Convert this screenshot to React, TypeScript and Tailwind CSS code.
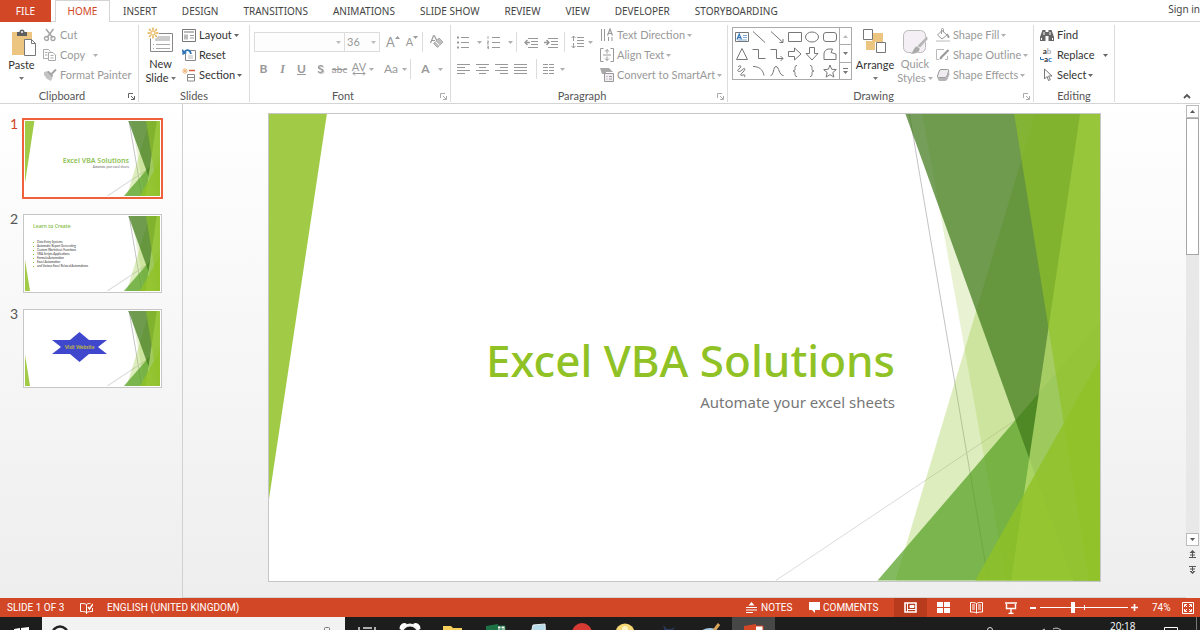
import React from "react";
import type { ReactNode } from "react";

const TABS = [
  "INSERT",
  "DESIGN",
  "TRANSITIONS",
  "ANIMATIONS",
  "SLIDE SHOW",
  "REVIEW",
  "VIEW",
  "DEVELOPER",
  "STORYBOARDING",
];

function Caret({ className = "text-[#777]" }: { className?: string }) {
  return (
    <svg width="5" height="3" viewBox="0 0 5 3" className={`shrink-0 ${className}`} aria-hidden="true">
      <path d="M0 0h5L2.5 3z" fill="currentColor" />
    </svg>
  );
}

function Icon({ w = 16, h = 16, children, className = "" }: { w?: number; h?: number; children: ReactNode; className?: string }) {
  return (
    <svg
      width={w}
      height={h}
      viewBox={`0 0 ${w} ${h}`}
      fill="none"
      stroke="currentColor"
      className={`shrink-0 ${className}`}
      aria-hidden="true"
    >
      {children}
    </svg>
  );
}

function Group({
  label,
  className,
  launcher,
  children,
}: {
  label: string;
  className: string;
  launcher?: "on" | "off";
  children: ReactNode;
}) {
  return (
    <section aria-label={label} className={`mb-px mt-[3px] flex shrink-0 flex-col border-r border-[#dcdcdc] ${className}`}>
      <div className="flex h-[60px]">{children}</div>
      <div className="flex flex-1 items-end">
        <span className="flex-1 text-center text-[11px] leading-[13px] text-[#555]">{label}</span>
        {launcher && (
          <button type="button" aria-label={`${label} options`} className="flex h-[11px] w-[14px] items-center pl-1">
            <Icon w={7} h={7} className={launcher === "on" ? "text-[#666]" : "text-[#aaa]"}>
              <path d="M.5 5V.5H5M3 3l3 3M6.5 3v3.500H3" />
            </Icon>
          </button>
        )}
      </div>
    </section>
  );
}

function RowButton({
  icon,
  label,
  caret,
  enabled,
  wide,
}: {
  icon: ReactNode;
  label: string;
  caret?: boolean;
  enabled?: boolean;
  wide?: boolean;
}) {
  return (
    <button
      type="button"
      className={`flex h-5 items-center whitespace-nowrap text-[11px] ${enabled ? "text-[#333]" : "text-[#999]"}`}
    >
      <span className="flex w-[17px] items-center">{icon}</span>
      <span>{label}</span>
      {caret && (
        <span className={wide ? "ml-2" : "ml-[2px]"}>
          <Caret className={enabled ? "text-[#666]" : "text-[#b0b0b0]"} />
        </span>
      )}
    </button>
  );
}

function Tool({ label, className = "w-[19px]", children }: { label: string; className?: string; children: ReactNode }) {
  return (
    <button type="button" aria-label={label} className={`flex h-5 shrink-0 items-center justify-center text-[#999] ${className}`}>
      {children}
    </button>
  );
}

function Divider() {
  return <span className="h-5 w-px shrink-0 bg-[#dcdcdc]" />;
}

function Lines({ rows, w = 13 }: { rows: [number, number][]; w?: number }) {
  return (
    <Icon w={w} h={11}>
      <path d={rows.map(([a, b], i) => `M${a} ${i * 3 + 0.5}H${b}`).join("")} />
    </Icon>
  );
}

function ClipboardGroup() {
  return (
    <Group label="Clipboard" className="w-[139px]" launcher="on">
      <button type="button" className="flex w-[43px] flex-col items-center pt-1 text-[11px] text-[#333]">
        <Icon w={26} h={28} className="ml-1">
          <path d="M1 3h20v23H1z" fill="#ecc681" stroke="none" />
          <path d="M6 3h2.500a2.500 2.500 0 0 1 5 0H16v4H6z" fill="#5f5f5f" stroke="none" />
          <circle cx="11" cy="3" r="1" fill="#fff" stroke="none" />
          <path d="M13.500 10.500h7l4 4v12h-11z" fill="#fff" stroke="#777" />
          <path d="M20.500 10.500v4h4" stroke="#777" />
        </Icon>
        <span className="leading-4">Paste</span>
        <span className="pt-1">
          <Caret />
        </span>
      </button>
      <div className="flex flex-col">
        <RowButton
          label="Cut"
          icon={
            <Icon w={14} h={14} className="text-[#a5a5a5]">
              <path d="M3 1l6.500 8.500M10.500 1L4 9.500" strokeWidth="1.500" />
              <circle cx="3.500" cy="10.500" r="2" strokeWidth="1.300" />
              <circle cx="10" cy="10.500" r="2" strokeWidth="1.300" />
            </Icon>
          }
        />
        <RowButton
          label="Copy"
          caret
          wide
          icon={
            <Icon w={14} h={14} className="text-[#aaa]">
              <path d="M5 10.500H.5v-9h5l2 2M2 4.500h2.500M2 7h2.500" />
              <path d="M5.500 4.500h4.500l2.500 2.500v5.500h-7zM7.500 7.500h3M7.500 10h3" fill="#fff" />
            </Icon>
          }
        />
        <RowButton
          label="Format Painter"
          icon={
            <Icon w={14} h={14} className="text-[#a5a5a5]">
              <path d="M1 4l4-1 5 5-2 5-4-2-3-4z" fill="#c4c4c4" stroke="none" />
              <path d="M5 3.500l4.500 4.500M8 6.500L13 1.500" strokeWidth="2" />
            </Icon>
          }
        />
      </div>
    </Group>
  );
}

function SlidesGroup() {
  return (
    <Group label="Slides" className="w-[111px]">
      <button type="button" className="flex w-[43px] flex-col items-center pt-[2px] text-[11px] text-[#333]">
        <Icon w={27} h={30}>
          <path d="M3.500 6.500h22v18h-22z" fill="#fff" stroke="#888" />
          <path d="M8 9h15v5H8z" fill="#ccc" stroke="none" />
          <path d="M6 17.500h1M9 17.500h14M6 21.500h1M9 21.500h14" stroke="#aaa" />
          <circle cx="6" cy="6" r="6" fill="#fff" stroke="none" />
          <path d="M6 .5v3M6 8.500v3M.5 6h3M8.500 6h3M2 2l2 2M8 8l2 2M10 2L8 4M4 8l-2 2" stroke="#e6b04e" strokeWidth="1.400" />
          <circle cx="6" cy="6" r="2" stroke="#e6b04e" />
        </Icon>
        <span className="leading-[14px]">New</span>
        <span className="flex items-center gap-[2px] leading-[14px]">
          Slide <Caret />
        </span>
      </button>
      <div className="flex flex-col">
        <RowButton
          enabled
          caret
          label="Layout"
          icon={
            <Icon w={14} h={13}>
              <path d="M.5.5h13v12H.5z" fill="#fff" stroke="#777" />
              <path d="M2 2h10v2H2zM2 5.500h4v5H2z" fill="#bbb" stroke="none" />
              <path d="M8 6.500h4M8 9h4" stroke="#999" />
            </Icon>
          }
        />
        <RowButton
          enabled
          label="Reset"
          icon={
            <Icon w={14} h={14}>
              <path d="M3.500 5.500v7h10v-10H8" stroke="#888" />
              <path d="M6 8h5M6 10h5" stroke="#bbb" />
              <path d="M2 5c2-4 6-4 7 1" stroke="#2e75b6" strokeWidth="1.700" />
              <path d="M0 1l.5 6L5 5z" fill="#2e75b6" stroke="none" />
            </Icon>
          }
        />
        <RowButton
          enabled
          caret
          label="Section"
          icon={
            <Icon w={14} h={14}>
              <path d="M7 2.500h6" stroke="#d8603a" strokeWidth="1.500" />
              <path d="M3 0v6M0 3h6M1 1l4 4M5 1L1 5" stroke="#edb878" />
              <path d="M5.500 6.500h7v6.500h-7zM5.500 9.500h7" stroke="#888" />
            </Icon>
          }
        />
      </div>
    </Group>
  );
}

function FontGroup() {
  return (
    <Group label="Font" className="w-[201px]" launcher="off">
      <div className="flex flex-col gap-[7px] pl-1 pt-[7px]">
        <div className="flex h-5 items-center">
          <div className="relative h-5 w-[91px]">
            <select
              aria-label="Font name"
              className="block h-5 w-full appearance-none border border-[#dcdcdc] bg-[#fdfdfd]"
              defaultValue=""
            >
              <option value="" />
            </select>
            <span className="pointer-events-none absolute inset-y-0 right-1 flex items-center">
              <Caret className="text-[#bbb]" />
            </span>
          </div>
          <div className="relative -ml-px h-5 w-9">
            <select
              aria-label="Font size"
              className="block h-5 w-full appearance-none border border-[#dcdcdc] bg-[#fdfdfd] pl-[2px] text-[11px] leading-4 text-[#999]"
            >
              <option>36</option>
            </select>
            <span className="pointer-events-none absolute inset-y-0 right-1 flex items-center">
              <Caret className="text-[#bbb]" />
            </span>
          </div>
          <Tool label="Increase font size" className="w-[22px] pl-1">
            <span className="text-[13px] leading-4">A</span>
            <svg width="5" height="12" aria-hidden="true">
              <path d="M0 3h5L2.500 0z" fill="currentColor" />
            </svg>
          </Tool>
          <Tool label="Decrease font size" className="w-5">
            <span className="text-[11px] leading-4">A</span>
            <svg width="5" height="12" aria-hidden="true">
              <path d="M0 0h5L2.500 3z" fill="currentColor" />
            </svg>
          </Tool>
          <Divider />
          <Tool label="Clear formatting" className="ml-1 w-5">
            <Icon w={14} h={14}>
              <path d="M.5 8L3.500.800h1L6.500 5M2 5.500h3" strokeWidth="1.200" />
              <path d="M9 3l4 4-5.500 5.500-4-4z" fill="#c0c0c0" stroke="#aaa" />
              <path d="M5.500 6.500l4 4" stroke="#fff" />
            </Icon>
          </Tool>
        </div>
        <div className="flex h-5 items-center text-[12px] font-bold">
          <Tool label="Bold">B</Tool>
          <Tool label="Italic">
            <i className="font-['Liberation_Serif',serif]">I</i>
          </Tool>
          <Tool label="Underline">
            <u>U</u>
          </Tool>
          <Tool label="Shadow">
            <span className="drop-shadow-[1px_1px_0_#ccc]">S</span>
          </Tool>
          <Tool label="Strikethrough">
            <s className="text-[10px] font-normal">abc</s>
          </Tool>
          <Tool label="Character spacing" className="w-7 gap-[3px] font-normal">
            <span className="flex flex-col items-center">
              <span className="text-[11px] leading-[9px]">AV</span>
              <Icon w={14} h={5}>
                <path d="M1 2.500h12M3 .5l-2 2 2 2M11 .5l2 2-2 2" />
              </Icon>
            </span>
            <Caret className="text-[#b0b0b0]" />
          </Tool>
          <Tool label="Change case" className="ml-1 w-[29px] gap-1 font-normal">
            Aa <Caret className="text-[#b0b0b0]" />
          </Tool>
          <Divider />
          <Tool label="Font color" className="ml-[6px] w-[30px] gap-2">
            A <Caret className="text-[#b0b0b0]" />
          </Tool>
        </div>
      </div>
    </Group>
  );
}

function ParagraphGroup() {
  return (
    <Group label="Paragraph" className="w-[277px]" launcher="off">
      <div className="flex w-[149px] flex-col gap-[7px] pl-[3px] pt-[7px]">
        <div className="flex h-5 items-center">
          <Tool label="Bullets" className="w-[30px] gap-2">
            <Icon w={12} h={13}>
              <path d="M4 1.500h8M4 6.500h8M4 11.500h8" />
              <path d="M0 .5h2v2H0zM0 5.500h2v2H0zM0 10.500h2v2H0z" fill="currentColor" stroke="none" />
            </Icon>
            <Caret className="text-[#b0b0b0]" />
          </Tool>
          <Tool label="Numbering" className="w-[31px] gap-2">
            <Icon w={13} h={13}>
              <path d="M5 1.500h8M5 6.500h8M5 11.500h8" />
              <path d="M1 0v3M0 5h1.500v1.500H0V8h2M0 10h1.500v3H0M0 11.500h1.500" strokeWidth=".8" />
            </Icon>
            <Caret className="text-[#b0b0b0]" />
          </Tool>
          <span className="w-px" />
          <Divider />
          <Tool label="Decrease indent" className="ml-1 w-5">
            <Icon w={14} h={11}>
              <path d="M4 1.500h10M7 4.500h7M7 7.500h7M4 10.500h10" />
              <path d="M1 5.500h5M3.500 3L1 5.500 3.500 8" strokeWidth="1.500" />
            </Icon>
          </Tool>
          <Tool label="Increase indent" className="w-5">
            <Icon w={14} h={11}>
              <path d="M4 1.500h10M7 4.500h7M7 7.500h7M4 10.500h10" />
              <path d="M0 5.500h5M2.500 3L5 5.500 2.500 8" strokeWidth="1.500" />
            </Icon>
          </Tool>
          <span className="w-[3px]" />
          <Divider />
          <Tool label="Line spacing" className="ml-1 w-[26px] gap-1">
            <Icon w={13} h={14}>
              <path d="M6 2.500h7M6 5.500h7M6 8.500h7M6 11.500h7M2.500 1v5M2.500 8v5M.5 3l2-2 2 2M.5 11l2 2 2-2" />
            </Icon>
            <Caret className="text-[#b0b0b0]" />
          </Tool>
        </div>
        <div className="flex h-5 items-center">
          <Tool label="Align left">
            <Lines rows={[[0, 13], [0, 8], [0, 13], [0, 8]]} />
          </Tool>
          <Tool label="Center">
            <Lines rows={[[0, 13], [3, 10], [0, 13], [3, 10]]} />
          </Tool>
          <Tool label="Align right">
            <Lines rows={[[0, 13], [5, 13], [0, 13], [5, 13]]} />
          </Tool>
          <Tool label="Justify">
            <Lines rows={[[0, 13], [0, 13], [0, 13], [0, 13]]} />
          </Tool>
          <span className="w-[6px]" />
          <Divider />
          <Tool label="Columns" className="ml-1 w-[26px] gap-[6px]">
            <Icon w={11} h={11}>
              <path d="M0 .5h5M0 3.500h5M0 6.500h5M0 9.500h5M6 .5h5M6 3.500h5M6 6.500h5M6 9.500h5" />
            </Icon>
            <Caret className="text-[#b0b0b0]" />
          </Tool>
        </div>
      </div>
      <div className="flex flex-col">
        <RowButton
          caret
          label="Text Direction"
          icon={
            <Icon w={14} h={14}>
              <path d="M1.500 1v12M4.500 1v12M8.500 9v4M12 9v4" />
              <path d="M7.500 7.500L10 1l2.500 6.500M8.500 5.500h3" strokeWidth="1.200" />
            </Icon>
          }
        />
        <RowButton
          caret
          label="Align Text"
          icon={
            <Icon w={14} h={14}>
              <path d="M3.500.5H.5v13h3M10.500.5h3v13h-3M3 7h8M7 1.500v4M7 8.500v4M5 3.500l2-2 2 2M5 10.500l2 2 2-2" />
            </Icon>
          }
        />
        <RowButton
          caret
          label="Convert to SmartArt"
          icon={
            <Icon w={14} h={14}>
              <path d="M0 0h9l4 4H6v2H2z" fill="#a9a9a9" stroke="none" />
              <path d="M4.500 5.500h9v8h-9z" fill="#f3eef4" />
              <path d="M6.500 8.500h1M9 8.500h3M6.500 11h1M9 11h3" />
            </Icon>
          }
        />
      </div>
    </Group>
  );
}

const SHAPES: { name: string; draw: ReactNode }[] = [
  {
    name: "Text box",
    draw: (
      <>
        <path d="M.5 2.500h13v9H.5z" fill="#fff" />
        <path d="M2 9.500L4.200 4 6.500 9.500M3 7.700h2.500" stroke="#2e75b6" strokeWidth="1.200" />
        <path d="M8 5.500h4M8 7.500h4M3 10h9" stroke="#7fa6cf" />
      </>
    ),
  },
  { name: "Line", draw: <path d="M1 1.500l12 11" /> },
  { name: "Arrow", draw: <path d="M1 1.500l12 11M9.500 12.500H13V9" /> },
  { name: "Rectangle", draw: <path d="M.5 2.500h13v9H.5z" /> },
  { name: "Oval", draw: <ellipse cx="7" cy="7" rx="6.500" ry="5" /> },
  { name: "Rounded rectangle", draw: <rect x=".5" y="2.500" width="13" height="9" rx="2.500" /> },
  { name: "Triangle", draw: <path d="M7 1.500l5.500 11h-11z" /> },
  { name: "Elbow connector", draw: <path d="M.5 2.500h6v9h7" /> },
  { name: "Elbow arrow", draw: <path d="M.5 2.500h6v9h6.500M10.500 9l2.500 2.500-2.500 2.500" /> },
  { name: "Right arrow", draw: <path d="M.5 4.500h6v-3.500l6.500 6-6.500 6v-3.500h-6z" /> },
  { name: "Down arrow", draw: <path d="M4.500 .5v6H1l6 6.500 6-6.500H9.500v-6z" /> },
  { name: "Pie shape", draw: <path d="M1 12.500V7a5 5 0 0 1 5-5h3.500L8 5.500l5 1.500v5.500z" /> },
  { name: "Scribble", draw: <path d="M3 3c3-3 4 0 1 2s0 4 3 1 4-1 1 2-3 4 0 3 2 2 1 2" /> },
  { name: "Curve", draw: <path d="M1 2.500c6 0 10 3 11 9" /> },
  { name: "Freeform curve", draw: <path d="M.5 11.500C4 11.500 3 2.500 6 2.500s3 9 7.500 9" /> },
  { name: "Left brace", draw: <path d="M9 1.500c-2 0-2 1-2 3S6.500 7 5 7c1.500 0 2 .5 2 2.500s0 3 2 3" /> },
  { name: "Right brace", draw: <path d="M5 1.500c2 0 2 1 2 3S7.500 7 9 7c-1.500 0-2 .5-2 2.500s0 3-2 3" /> },
  { name: "Star", draw: <path d="M7 1l1.700 4.300 4.600.3-3.500 3 1.100 4.500L7 10.600l-3.900 2.500 1.100-4.500-3.500-3 4.600-.3z" /> },
];

function DrawingGroup() {
  return (
    <Group label="Drawing" className="w-[306px]" launcher="off">
      <div className="ml-1 mt-[2px] flex h-[53px] w-[120px] shrink-0 border border-[#ababab] bg-white">
        <div className="grid flex-1 grid-cols-6 grid-rows-3">
          {SHAPES.map((s) => (
            <button key={s.name} type="button" aria-label={s.name} className="flex items-center justify-center text-[#777]">
              <Icon w={14} h={14}>
                {s.draw}
              </Icon>
            </button>
          ))}
        </div>
        <div className="flex w-3 flex-col divide-y divide-[#ababab] border-l border-[#ababab]">
          <button type="button" aria-label="Previous shapes" className="flex flex-1 items-center justify-center">
            <Caret className="rotate-180 text-[#bbb]" />
          </button>
          <button type="button" aria-label="Next shapes" className="flex flex-1 items-center justify-center">
            <Caret />
          </button>
          <button type="button" aria-label="More shapes" className="flex flex-1 flex-col items-center justify-center gap-[2px]">
            <span className="h-px w-[5px] bg-[#777]" />
            <Caret />
          </button>
        </div>
      </div>
      <button type="button" className="ml-[3px] flex w-10 shrink-0 flex-col items-center pt-[3px] text-[11px] text-[#333]">
        <Icon w={26} h={29}>
          <path d="M10 5h11v9H10zM4 13h9v9H4z" fill="#ecc681" stroke="none" />
          <path d="M1.500 1.500h9v10h-9zM14.500 14.500h9v10h-9z" fill="#fff" stroke="#777" />
        </Icon>
        <span className="leading-4">Arrange</span>
        <span className="pt-1">
          <Caret />
        </span>
      </button>
      <button type="button" className="flex w-10 shrink-0 flex-col items-center pt-[3px] text-[11px] text-[#999]">
        <Icon w={27} h={29}>
          <rect x="1.500" y="2.500" width="22" height="22" rx="5" fill="#f4eff4" stroke="#bbb" />
          <path d="M25 8l1 3-8 9-3-2z" fill="#b5b5b5" stroke="#fff" strokeWidth=".5" />
          <path d="M15 18l3 2.500c0 4-5 6-10 5.500 3-1 3-7 7-8z" fill="#aaa" stroke="#fff" strokeWidth=".5" />
        </Icon>
        <span className="leading-[14px]">Quick</span>
        <span className="flex items-center gap-[2px] leading-[14px]">
          Styles <Caret className="text-[#b0b0b0]" />
        </span>
      </button>
      <div className="ml-px flex flex-col">
        <RowButton
          caret
          label="Shape Fill"
          icon={
            <Icon w={14} h={14}>
              <path d="M6 2.500l5 4.500-5 4-4.500-4z" fill="#fff" />
              <path d="M5.500 6V1.500a1 1 0 0 1 2 0V4M11 6c2 1 2 3 1.500 4" />
              <path d="M11 5l2.500 4-2 1z" fill="currentColor" stroke="none" />
              <path d="M0 12h14v2H0z" fill="#ddd" stroke="none" />
            </Icon>
          }
        />
        <RowButton
          caret
          label="Shape Outline"
          icon={
            <Icon w={14} h={14}>
              <path d="M8 1.500H.5v10H3M9 11.500h2.500V8" stroke="#bbb" />
              <path d="M5 9.500L12.500 2" strokeWidth="2.200" />
              <path d="M3.500 11.500l.5-3 2.500 2z" fill="currentColor" stroke="none" />
            </Icon>
          }
        />
        <RowButton
          caret
          label="Shape Effects"
          icon={
            <Icon w={14} h={14}>
              <path d="M5 1.500h6.500q1.500 0 1.200 1.500l-1.700 5q-.5 1.500-2 1.500H2.500q-1.500 0-1-1.500l1.700-5q.5-1.500 1.800-1.500z" fill="#f0ebf1" />
              <path d="M1 8.500q.5 1.500 2 1.300h6q1.500 0 2-1.500l2-5.500.5 4-2 4.500q-.7 1.700-2.500 1.700H4q-1.500 0-2-1.500z" fill="#b5b5b5" stroke="none" />
            </Icon>
          }
        />
      </div>
    </Group>
  );
}

function EditingGroup() {
  return (
    <Group label="Editing" className="w-[81px]">
      <div className="ml-[6px] flex flex-col">
        <RowButton
          enabled
          label="Find"
          icon={
            <Icon w={14} h={13} className="text-[#666]">
              <path d="M2.500 1h3v2h3V1h3l2.500 7v4H8.500V7h-3v5H0V8z" fill="#666" stroke="none" />
              <path d="M1.500 9v2M4 3v3M10 3v3M12.500 9v2" stroke="#fff" />
            </Icon>
          }
        />
        <RowButton
          enabled
          caret
          wide
          label="Replace"
          icon={
            <span className="flex w-[14px] flex-col text-[8px] font-bold leading-[8px]">
              <span>
                a<span className="text-[#aaa]">b</span>
              </span>
              <span className="flex items-center">
                <Icon w={4} h={5} className="text-[#2e75b6]">
                  <path d="M.5 0v2.500H4" />
                </Icon>
                a<span className="text-[#2e75b6]">c</span>
              </span>
            </span>
          }
        />
        <RowButton
          enabled
          caret
          label="Select"
          icon={
            <Icon w={14} h={14} className="text-[#777]">
              <path d="M4.500 1v10l2.500-2.500 1.500 4 1.800-.8-1.700-3.700H12z" fill="#fff" />
            </Icon>
          }
        />
      </div>
    </Group>
  );
}

function Facets({ left }: { left: "tall" | "short" }) {
  return (
    <svg viewBox="0 0 833 469" preserveAspectRatio="none" className="absolute inset-0 h-full w-full" aria-hidden="true">
      <path d={left === "tall" ? "M0 0H58L0 387z" : "M0 273L31 469H0z"} fill="#90c226" fillOpacity=".85" />
      <path d="M642 0L721 469" stroke="#c4c4c4" vectorEffect="non-scaling-stroke" />
      <path d="M508 469L833 251" stroke="#dadada" vectorEffect="non-scaling-stroke" />
      <path d="M768 0H833V469H628z" fill="#90c226" fillOpacity=".3" />
      <path d="M655 0H833V469H739z" fill="#90c226" fillOpacity=".2" />
      <path d="M833 209V469H610z" fill="#54a021" fillOpacity=".72" />
      <path d="M638 0H833V469H806z" fill="#3f7819" fillOpacity=".72" />
      <path d="M813 0H833V469H744z" fill="#c0e474" fillOpacity=".7" />
      <path d="M747 0H833V469H822z" fill="#90c226" fillOpacity=".65" />
      <path d="M833 246V469H708z" fill="#90c226" fillOpacity=".8" />
    </svg>
  );
}

const BULLETS = [
  "Data Entry Systems",
  "Automatic Report Generating",
  "Custom Worksheet Functions",
  "VBA Scripts Applications",
  "Formula Automation",
  "Excel Automation",
  "and Various Excel Related Automations",
];

function Thumb({ n, active, left, children }: { n: number; active?: boolean; left: "tall" | "short"; children: ReactNode }) {
  return (
    <li className="flex items-start">
      <span className={`w-[22px] pl-[10px] text-[14px] leading-3 ${active ? "text-[#d24726]" : "text-[#555]"}`}>{n}</span>
      <button
        type="button"
        aria-label={`Slide ${n}`}
        className={`h-[81px] w-[141px] text-left ${active ? "border-2 border-[#f0603a]" : "p-px"}`}
      >
        <span className={`block h-full w-full bg-white p-px ${active ? "" : "border border-[#c6c6c6]"}`}>
          <span className="relative block h-full w-full overflow-hidden">
            <Facets left={left} />
            <span className="relative block h-full">{children}</span>
          </span>
        </span>
      </button>
    </li>
  );
}

function SlidePanel() {
  return (
    <aside className="w-[183px] shrink-0 border-r border-[#d0d0d0] pt-[14px]">
      <ol className="flex flex-col gap-[14px]">
        <Thumb n={1} active left="tall">
          <span className="flex flex-col items-end pr-[31px] pt-[35px]">
            <span className="font-['Noto_Sans',sans-serif] text-[7px] font-semibold leading-[9px] text-[#8cc152]">
              Excel VBA Solutions
            </span>
            <span className="text-[3px] leading-[4px] text-[#666]">Automate your excel sheets</span>
          </span>
        </Thumb>
        <Thumb n={2} left="short">
          <span className="block pl-2 pt-[6px]">
            <span className="block font-['Noto_Sans',sans-serif] text-[5px] font-semibold leading-[8px] text-[#8cc152]">
              Learn to Create
            </span>
            <span className="mt-[10px] block text-[3px] leading-[4px] text-[#333]">
              {BULLETS.map((b) => (
                <span key={b} className="flex items-center gap-[3px]">
                  <span className="h-px w-px bg-[#90c226]" />
                  {b}
                </span>
              ))}
            </span>
          </span>
        </Thumb>
        <Thumb n={3} left="short">
          <span className="flex pl-[27px] pt-[21px]">
            <span className="relative flex h-[30px] w-[55px] items-center justify-center">
              <svg viewBox="0 0 55 30" className="absolute inset-0 h-full w-full" aria-hidden="true">
                <path d="M0 8h18l9.500-8L37 8h18l-9 7 9 7H37l-9.500 8L18 22H0l9-7z" fill="#3f48cc" />
              </svg>
              <span className="relative text-[5px] font-bold leading-[6px] text-[#c2b83c]">Visit Website</span>
            </span>
          </span>
        </Thumb>
      </ol>
    </aside>
  );
}

function Scrollbar() {
  return (
    <div className="flex w-[14px] shrink-0 flex-col pr-px pt-px">
      <button type="button" aria-label="Scroll up" className="flex h-[13px] items-center justify-center border border-[#bbb] bg-white">
        <Caret className="rotate-180 text-[#555]" />
      </button>
      <div className="flex-1 bg-[#e8e8e8]">
        <div className="h-[33%] border border-[#a6a6a6] bg-white" />
      </div>
      <button type="button" aria-label="Scroll down" className="flex h-[13px] items-center justify-center border border-[#bbb] bg-white">
        <Caret className="text-[#555]" />
      </button>
      <button type="button" aria-label="Previous slide" className="flex h-4 items-center justify-center">
        <svg width="7" height="8" aria-hidden="true">
          <path d="M3.500 0L6.500 3h-6zM3 2h1v5H3zM0 7h7v1H0zM1 4.500h5v1H1z" fill="#555" />
        </svg>
      </button>
      <button type="button" aria-label="Next slide" className="flex h-4 items-center justify-center">
        <svg width="7" height="8" aria-hidden="true">
          <path d="M3.500 8L6.500 5h-6zM3 1h1v5H3zM0 0h7v1H0zM1 2.500h5v1H1z" fill="#555" />
        </svg>
      </button>
      <span className="h-5" />
    </div>
  );
}

function StatusBar() {
  return (
    <footer className="flex h-[19px] shrink-0 items-center bg-[#d24726] font-['Roboto',sans-serif] text-[10px] text-white">
      <span className="w-20 pl-[7px]">SLIDE 1 OF 3</span>
      <button type="button" aria-label="Spelling" className="w-[27px]">
        <Icon w={13} h={12}>
          <path d="M6.500 10.500C5 9.500 3 9.500.5 9.500v-8c2.500 0 4.500 0 6 1V12M6.500 2.500c1-1 2-1 4-1M12.500 6v3.500c-2 0-4 0-6 1" />
          <path d="M8 5l1.500 2L13 2" strokeWidth="1.400" />
        </Icon>
      </button>
      <span>ENGLISH (UNITED KINGDOM)</span>
      <span className="flex-1" />
      <button type="button" className="flex w-[63px] items-center gap-1">
        <Icon w={11} h={11}>
          <path d="M0 5.500h11M0 8h11M0 10.500h7" />
          <path d="M5.500 0L8.500 3.500h-6z" fill="#fff" stroke="none" />
        </Icon>
        NOTES
      </button>
      <button type="button" className="flex w-[85px] items-center gap-[3px]">
        <Icon w={11} h={11}>
          <path d="M0 0h11v8H6v3L3 8H0z" fill="#fff" stroke="none" />
        </Icon>
        COMMENTS
      </button>
      <button type="button" aria-label="Normal view" className="flex h-full w-[33px] items-center justify-center bg-[#b83b1d]">
        <Icon w={13} h={11}>
          <path d="M1 1h11v9H1z" strokeWidth="1.600" />
          <path d="M3.500 1v9M3 7.500h9" />
          <path d="M6 3.500h4v2H6z" fill="#fff" />
        </Icon>
      </button>
      <button type="button" aria-label="Slide sorter" className="flex h-full w-[33px] items-center justify-center">
        <Icon w={13} h={11}>
          <path d="M0 0h6v5H0zM7 0h6v5H7zM0 6h6v5H0zM7 6h6v5H7z" fill="#fff" stroke="none" />
        </Icon>
      </button>
      <button type="button" aria-label="Reading view" className="flex h-full w-[33px] items-center justify-center">
        <Icon w={13} h={12}>
          <path d="M6.500 1.500C5 .5 3 .5.5.5v9.500c2.500 0 4.500 0 6 1 1.500-1 3.500-1 6-1V.5c-2.500 0-4.500 0-6 1zV11M2 3h3M2 5h3M2 7h3M8 3h3M8 5h3M8 7h3" />
        </Icon>
      </button>
      <button type="button" aria-label="Slide show" className="flex h-full w-[36px] items-center justify-center">
        <Icon w={12} h={12}>
          <path d="M0 1h12M1.500 2v4.500h9V2M6 7v4M3.500 11.500h5" strokeWidth="1.400" />
        </Icon>
      </button>
      <button type="button" aria-label="Zoom out" className="flex w-[11px] items-center justify-end pr-1">
        <span className="h-[2px] w-[6px] shrink-0 bg-white" />
      </button>
      <div className="relative flex h-full w-[88px] items-center">
        <span className="absolute left-1/2 h-[5px] w-px bg-white" />
        <input
          type="range"
          aria-label="Zoom"
          min={10}
          max={190}
          defaultValue={76}
          className="h-3 w-full appearance-none bg-transparent [&::-webkit-slider-runnable-track]:h-px [&::-webkit-slider-runnable-track]:bg-white [&::-webkit-slider-thumb]:-mt-[5px] [&::-webkit-slider-thumb]:h-[11px] [&::-webkit-slider-thumb]:w-1 [&::-webkit-slider-thumb]:appearance-none [&::-webkit-slider-thumb]:bg-white"
        />
      </div>
      <button type="button" aria-label="Zoom in" className="flex w-6 items-center pl-[3px]">
        <Icon w={7} h={7}>
          <path d="M0 3.500h7M3.500 0v7" strokeWidth="1.600" />
        </Icon>
      </button>
      <button type="button" className="w-[30px] text-left">
        74%
      </button>
      <button type="button" aria-label="Fit slide to window" className="mr-[6px]">
        <Icon w={12} h={12}>
          <path d="M.5.5h11v11H.5z" />
          <path d="M2.500 5V2.500H5M7 2.500h2.500V5M9.500 7v2.500H7M5 9.500H2.500V7M3 3l2 2M9 3L7 5M9 9L7 7M3 9l2-2" />
        </Icon>
      </button>
    </footer>
  );
}

const APPS: { name: string; active?: boolean; draw: ReactNode }[] = [
  { name: "Task View", draw: <path d="M4 10v4M8 11h9M20 10v4M8 14h9" stroke="#ddd" strokeWidth="1.500" /> },
  {
    name: "Clock",
    draw: (
      <>
        <circle cx="12" cy="17" r="9" fill="#1a1a1a" stroke="#f2f2f2" strokeWidth="3" />
        <path d="M3 12c0-4 3-5 5-4M21 12c0-4-3-5-5-4" stroke="#fff" strokeWidth="3" />
      </>
    ),
  },
  { name: "File Explorer", draw: <path d="M2 9h8l2 2h9v15H2z" fill="#f7cf5b" stroke="none" /> },
  {
    name: "Excel",
    draw: (
      <>
        <path d="M12 9h9v16h-9z" fill="#fff" stroke="#1e7145" />
        <path d="M2 9l12-2v20L2 25z" fill="#1e7145" stroke="none" />
        <path d="M14 12h6M17 9v10" stroke="#1e7145" />
      </>
    ),
  },
  { name: "Notepad", draw: <path d="M6 8l12-1 1 18H2z" fill="#b7dbe8" stroke="#e8eef0" /> },
  { name: "Opera", draw: <circle cx="12" cy="16" r="10" fill="#d63a32" stroke="none" /> },
  {
    name: "Chrome",
    draw: (
      <>
        <circle cx="12" cy="16" r="9.500" fill="#f7d774" stroke="none" />
        <circle cx="12" cy="12" r="3" fill="#fff2c4" stroke="none" />
      </>
    ),
  },
  { name: "Messenger", draw: <path d="M7 8l4 4h4l4-2-3 5H9z" fill="#2b3a5c" stroke="none" /> },
  {
    name: "Paint",
    draw: (
      <>
        <ellipse cx="11" cy="17" rx="10" ry="6" fill="#a8cbe3" stroke="none" />
        <path d="M14 15l6-8" stroke="#d8a45c" strokeWidth="3" />
      </>
    ),
  },
  {
    name: "PowerPoint",
    active: true,
    draw: (
      <>
        <path d="M12 9h9v16h-9z" fill="#fff" stroke="#d24726" />
        <path d="M2 9l12-2v20L2 25z" fill="#d24726" stroke="none" />
      </>
    ),
  },
];

function Taskbar() {
  return (
    <nav aria-label="Taskbar" className="h-[13px] shrink-0 overflow-hidden bg-[#1d1d1d]">
      <div className="flex h-10 items-start">
        <button type="button" aria-label="Start" className="w-[42px] shrink-0 pl-[14px]">
          <Icon w={15} h={25}>
            <path d="M0 12l6-1v6H0zM7 11l8-1v7H7z" fill="#fff" stroke="none" />
          </Icon>
        </button>
        <div className="flex h-10 w-[303px] shrink-0 justify-between bg-[#f2f2f2] pl-2 pr-[14px]">
          <Icon w={20} h={30}>
            <circle cx="10" cy="17" r="7.500" stroke="#222" strokeWidth="2.500" />
          </Icon>
          <Icon w={8} h={30}>
            <rect x="1.500" y="10.500" width="5" height="12" rx="1" stroke="#777" />
          </Icon>
        </div>
        {APPS.map((a) => (
          <button
            key={a.name}
            type="button"
            aria-label={a.name}
            className={`flex h-10 w-[43px] shrink-0 justify-center ${a.active ? "bg-[#474747]" : ""}`}
          >
            <Icon w={24} h={30}>
              {a.draw}
            </Icon>
          </button>
        ))}
        <span className="flex-1" />
        <button type="button" aria-label="People" className="w-14">
          <Icon w={10} h={20} className="text-[#ddd]">
            <circle cx="5" cy="13" r="2.500" />
          </Icon>
        </button>
        <button type="button" aria-label="Network" className="w-[69px]">
          <Icon w={24} h={20} className="text-[#ddd]">
            <path d="M0 14l4-2M12 12c4-2 6 0 8 1" />
          </Icon>
        </button>
        <time className="w-[54px] pt-[2px] font-['Open_Sans',sans-serif] text-[10px] leading-[14px] text-white">20:18</time>
        <button type="button" aria-label="Notifications" className="w-[33px] border-r border-[#777]">
          <Icon w={14} h={24} className="text-white">
            <path d="M.5 10.500h13v10H.5z" />
          </Icon>
        </button>
        <span className="w-[3px]" />
      </div>
    </nav>
  );
}

export default function App() {
  return (
    <div className="flex h-screen flex-col overflow-hidden bg-white font-['Lato','Noto_Sans',sans-serif] text-[#444]">
      <nav aria-label="Ribbon tabs" className="flex h-[22px] shrink-0 items-stretch font-['Noto_Sans','Open_Sans',sans-serif] text-[10px]">
        <button type="button" className="w-[51px] bg-[#d24726] text-white">
          FILE
        </button>
        <div className="w-1 border-b border-[#d4d4d4]" />
        <button type="button" className="w-[55px] border-x border-t border-[#d4d4d4] text-[#d24726]">
          HOME
        </button>
        <div className="flex flex-1 items-center gap-[25px] border-b border-[#d4d4d4] pl-[13px] pt-px">
          {TABS.map((t) => (
            <button key={t} type="button" className="whitespace-nowrap">
              {t}
            </button>
          ))}
          <a href="#sign-in" className="ml-auto whitespace-nowrap pb-1">
            Sign in
          </a>
        </div>
      </nav>
      <div className="flex h-[82px] shrink-0 border-b border-[#d4d4d4]">
        <ClipboardGroup />
        <SlidesGroup />
        <FontGroup />
        <ParagraphGroup />
        <DrawingGroup />
        <EditingGroup />
        <button type="button" aria-label="Collapse ribbon" className="ml-auto mr-[9px] flex items-end pb-1">
          <Icon w={8} h={6} className="text-[#555]">
            <path d="M1 5l3-3 3 3" strokeWidth="1.800" />
          </Icon>
        </button>
      </div>
      <main className="flex min-h-0 flex-1 bg-gradient-to-b from-white to-[#eeeeee]">
        <SlidePanel />
        <div className="min-w-0 flex-1 border-b border-[#d4d4d4] px-[85px] pt-[9px]">
          <article className="relative aspect-video w-full overflow-hidden border border-[#c6c6c6] bg-white">
            <Facets left="tall" />
            <div className="relative flex h-full flex-col items-end pr-[205px] pt-[215px] text-right font-['Noto_Sans','Open_Sans',sans-serif]">
              <h1 className="whitespace-nowrap text-[44px] font-medium leading-[62px] text-[#90c226]">Excel VBA Solutions</h1>
              <p className="text-[15px] leading-[22px] text-[#777]">Automate your excel sheets</p>
            </div>
          </article>
        </div>
        <Scrollbar />
      </main>
      <StatusBar />
      <Taskbar />
    </div>
  );
}
